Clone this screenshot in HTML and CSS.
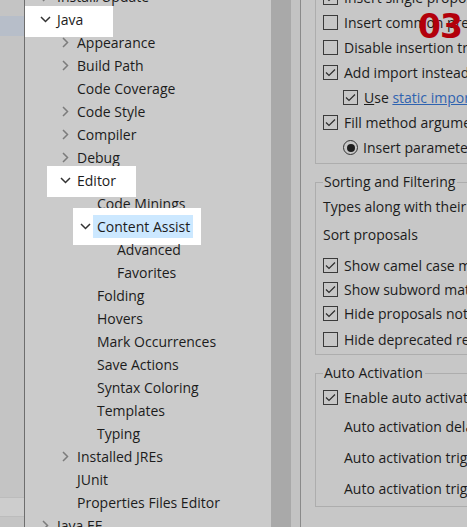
FILE: index.html
```html
<!DOCTYPE html>
<html lang="en">
<head>
    <meta charset="UTF-8">
    <title>Preferences - Content Assist</title>
    <link rel="stylesheet" href="styles.css">
</head>
<body>
    <div class="window">
        <div class="side">
            <div class="side-sel"></div>
            <div class="side-fill"></div>
            <div class="side-foot"></div>
        </div>

        <div class="tree">
            <div class="rows">
                <div class="row l0"><span class="tw closed"><svg width="7" height="11" viewBox="0 0 7 11"><path d="M1 1l4.5 4.5L1 10"/></svg></span><span class="lbl">Install/Update</span></div>
                <div class="row l0"><span class="mark m-java"><span class="tw open"><svg width="11" height="7" viewBox="0 0 11 7"><path d="M1 1l4.5 4.5L10 1"/></svg></span><span class="lbl">Java</span></span></div>
                <div class="row l1"><span class="tw closed"><svg width="7" height="11" viewBox="0 0 7 11"><path d="M1 1l4.5 4.5L1 10"/></svg></span><span class="lbl">Appearance</span></div>
                <div class="row l1"><span class="tw closed"><svg width="7" height="11" viewBox="0 0 7 11"><path d="M1 1l4.5 4.5L1 10"/></svg></span><span class="lbl">Build Path</span></div>
                <div class="row l1"><span class="tw"></span><span class="lbl">Code Coverage</span></div>
                <div class="row l1"><span class="tw closed"><svg width="7" height="11" viewBox="0 0 7 11"><path d="M1 1l4.5 4.5L1 10"/></svg></span><span class="lbl">Code Style</span></div>
                <div class="row l1"><span class="tw closed"><svg width="7" height="11" viewBox="0 0 7 11"><path d="M1 1l4.5 4.5L1 10"/></svg></span><span class="lbl">Compiler</span></div>
                <div class="row l1"><span class="tw closed"><svg width="7" height="11" viewBox="0 0 7 11"><path d="M1 1l4.5 4.5L1 10"/></svg></span><span class="lbl">Debug</span></div>
                <div class="row l1"><span class="mark m-editor"><span class="tw open"><svg width="11" height="7" viewBox="0 0 11 7"><path d="M1 1l4.5 4.5L10 1"/></svg></span><span class="lbl">Editor</span></span></div>
                <div class="row l2"><span class="tw"></span><span class="lbl">Code Minings</span></div>
                <div class="row l2"><span class="mark m-assist"><span class="tw open"><svg width="11" height="7" viewBox="0 0 11 7"><path d="M1 1l4.5 4.5L10 1"/></svg></span><span class="lbl sel">Content Assist</span></span></div>
                <div class="row l3"><span class="tw"></span><span class="lbl">Advanced</span></div>
                <div class="row l3"><span class="tw"></span><span class="lbl">Favorites</span></div>
                <div class="row l2"><span class="tw"></span><span class="lbl">Folding</span></div>
                <div class="row l2"><span class="tw"></span><span class="lbl">Hovers</span></div>
                <div class="row l2"><span class="tw"></span><span class="lbl">Mark Occurrences</span></div>
                <div class="row l2"><span class="tw"></span><span class="lbl">Save Actions</span></div>
                <div class="row l2"><span class="tw"></span><span class="lbl">Syntax Coloring</span></div>
                <div class="row l2"><span class="tw"></span><span class="lbl">Templates</span></div>
                <div class="row l2"><span class="tw"></span><span class="lbl">Typing</span></div>
                <div class="row l1"><span class="tw closed"><svg width="7" height="11" viewBox="0 0 7 11"><path d="M1 1l4.5 4.5L1 10"/></svg></span><span class="lbl">Installed JREs</span></div>
                <div class="row l1"><span class="tw"></span><span class="lbl">JUnit</span></div>
                <div class="row l1"><span class="tw"></span><span class="lbl">Properties Files Editor</span></div>
                <div class="row l0"><span class="tw closed"><svg width="7" height="11" viewBox="0 0 7 11"><path d="M1 1l4.5 4.5L1 10"/></svg></span><span class="lbl">Java EE</span></div>
            </div>
        </div>

        <div class="sash"></div>

        <div class="pane">
            <fieldset class="grp g1">
                <div class="opt"><span class="cb"><svg width="15" height="15" viewBox="0 0 15 15"><path d="M3 7.5l3 3L12 4.5"/></svg></span>Insert single proposals automatically</div>
                <div class="opt"><span class="cb"></span>Insert common prefixes automatically</div>
                <div class="opt"><span class="cb"></span>Disable insertion triggers except 'Enter'</div>
                <div class="opt"><span class="cb"><svg width="15" height="15" viewBox="0 0 15 15"><path d="M3 7.5l3 3L12 4.5"/></svg></span>Add import instead of qualified name</div>
                <div class="opt sub"><span class="cb"><svg width="15" height="15" viewBox="0 0 15 15"><path d="M3 7.5l3 3L12 4.5"/></svg></span><u>U</u>se&nbsp;<a class="link" href="#">static imports</a>&nbsp;(only 1.5 or higher)</div>
                <div class="opt"><span class="cb"><svg width="15" height="15" viewBox="0 0 15 15"><path d="M3 7.5l3 3L12 4.5"/></svg></span>Fill method arguments and show guessed arguments</div>
                <div class="opt sub"><span class="rb"></span>Insert parameter names</div>
            </fieldset>

            <fieldset class="grp g2">
                <legend>Sorting and Filtering</legend>
                <div class="line types">Types along with their members</div>
                <div class="line sort">Sort proposals</div>
                <div class="opt first"><span class="cb"><svg width="15" height="15" viewBox="0 0 15 15"><path d="M3 7.5l3 3L12 4.5"/></svg></span>Show camel case matches</div>
                <div class="opt"><span class="cb"><svg width="15" height="15" viewBox="0 0 15 15"><path d="M3 7.5l3 3L12 4.5"/></svg></span>Show subword matches</div>
                <div class="opt"><span class="cb"><svg width="15" height="15" viewBox="0 0 15 15"><path d="M3 7.5l3 3L12 4.5"/></svg></span>Hide proposals not visible in the invocation context</div>
                <div class="opt last"><span class="cb"></span>Hide deprecated references</div>
            </fieldset>

            <fieldset class="grp g3">
                <legend>Auto Activation</legend>
                <div class="opt"><span class="cb"><svg width="15" height="15" viewBox="0 0 15 15"><path d="M3 7.5l3 3L12 4.5"/></svg></span>Enable auto activation</div>
                <div class="field first">Auto activation delay (ms):</div>
                <div class="field">Auto activation triggers for Java:</div>
                <div class="field">Auto activation triggers for Javadoc:</div>
            </fieldset>

            <div class="stamp">03</div>
        </div>
    </div>
</body>
</html>
```

FILE: styles.css
```css
* {
    margin: 0;
    padding: 0;
    box-sizing: border-box;
}
html, body {
    width: 467px;
    height: 527px;
    overflow: hidden;
}
body {
    font-family: "Open Sans", "Noto Sans", sans-serif;
    font-size: 14px;
    color: #1c1c1c;
    background: #c8c8c8;
}
.window {
    display: flex;
    height: 527px;
}

/* left strip of the dialog */
.side {
    width: 25px;
    flex: none;
    display: flex;
    flex-direction: column;
    background: #c4c4c4;
    border-right: 1px solid #6e6e6e;
}
.side-sel {
    height: 20px;
    margin-top: 16px;
    background: #b7bec9;
}
.side-fill {
    flex: 1;
}
.side-foot {
    height: 20px;
    margin-bottom: 10px;
    background: #cdcdcd;
    border-top: 1px solid #bcbcbc;
    border-bottom: 1px solid #bcbcbc;
}

/* preference tree */
.tree {
    width: 246px;
    flex: none;
    background: #cbcbcb;
    overflow: hidden;
}
.rows {
    margin-top: -15px;
}
.row {
    display: flex;
    align-items: center;
    height: 23px;
    white-space: nowrap;
}
.l0 { padding-left: 12px; }
.l1 { padding-left: 32px; }
.l2 { padding-left: 52px; }
.l3 { padding-left: 72px; }
.tw {
    width: 20px;
    flex: none;
    display: flex;
    align-items: center;
    justify-content: center;
    padding-right: 3px;
}
.tw svg {
    fill: none;
    stroke-width: 1.5;
}
.tw.closed svg { stroke: #7c7c7c; }
.tw.open svg { stroke: #333333; }
.mark {
    display: flex;
    align-items: center;
    align-self: stretch;
    background: #ffffff;
}
.m-java {
    margin: -2px -30px -6px -12px;
    padding: 2px 30px 6px 12px;
}
.m-editor {
    margin: -3px -20px -5px -10px;
    padding: 3px 20px 5px 10px;
}
.m-assist {
    margin: -7px -8px -7px -4px;
    padding: 7px 8px 7px 4px;
}
.lbl.sel {
    background: #cce8ff;
    padding: 2px 3px 2px 4px;
    margin-left: -4px;
}

/* splitter */
.sash {
    width: 30px;
    flex: none;
    background: linear-gradient(to right, #a9a9a9 0 20px, #c3c3c3 20px 29px, #8a8a8a 29px);
}

/* right page */
.pane {
    position: relative;
    flex: 1;
    overflow: hidden;
    background: #c7c7c7;
}
.grp {
    width: 420px;
    margin-left: 14px;
    border: 1px solid #adadad;
    padding: 0 0 0 7px;
    min-inline-size: 0;
}
.grp legend {
    line-height: 20px;
    padding: 0 2px 0 1px;
}
.g1 {
    margin-top: -21px;
    padding-top: 5px;
    padding-bottom: 3px;
}
.g2 {
    margin-top: 8px;
    padding-top: 3px;
    padding-bottom: 3px;
}
.g3 {
    margin-top: 8px;
    padding-top: 2px;
    padding-bottom: 2px;
}
.opt {
    display: flex;
    align-items: center;
    height: 25px;
    white-space: nowrap;
}
.g2 .opt, .g3 .opt {
    height: 24px;
}
.g2 .opt.first { margin-top: 6px; }
.g2 .opt.last { margin-top: 2px; }
.opt.sub {
    padding-left: 20px;
}
.line {
    height: 24px;
    line-height: 24px;
    white-space: nowrap;
}
.line.sort { margin-top: 4px; }
.field {
    height: 31px;
    line-height: 31px;
    padding-left: 21px;
    white-space: nowrap;
}
.field.first { margin-top: 2px; }
.cb {
    width: 15px;
    height: 15px;
    flex: none;
    border: 1px solid #3a3a3a;
    margin-right: 6px;
    position: relative;
}
.cb svg {
    position: absolute;
    left: -1px;
    top: -1px;
    fill: none;
    stroke: #2c2c2c;
    stroke-width: 1.2;
}
.rb {
    width: 15px;
    height: 15px;
    flex: none;
    border: 1px solid #333333;
    border-radius: 50%;
    margin-right: 5px;
    display: flex;
    align-items: center;
    justify-content: center;
}
.rb::after {
    content: "";
    width: 8px;
    height: 8px;
    border-radius: 50%;
    background: #1e1e1e;
}
.opt u {
    text-decoration: underline;
}
.link {
    color: #2f63b0;
    text-decoration: underline;
}

/* red annotation number */
.stamp {
    position: absolute;
    left: 117px;
    top: 10px;
    font-family: "DejaVu Sans", sans-serif;
    font-weight: bold;
    font-size: 33px;
    line-height: 33px;
    letter-spacing: -1px;
    color: #b3000b;
}
```
